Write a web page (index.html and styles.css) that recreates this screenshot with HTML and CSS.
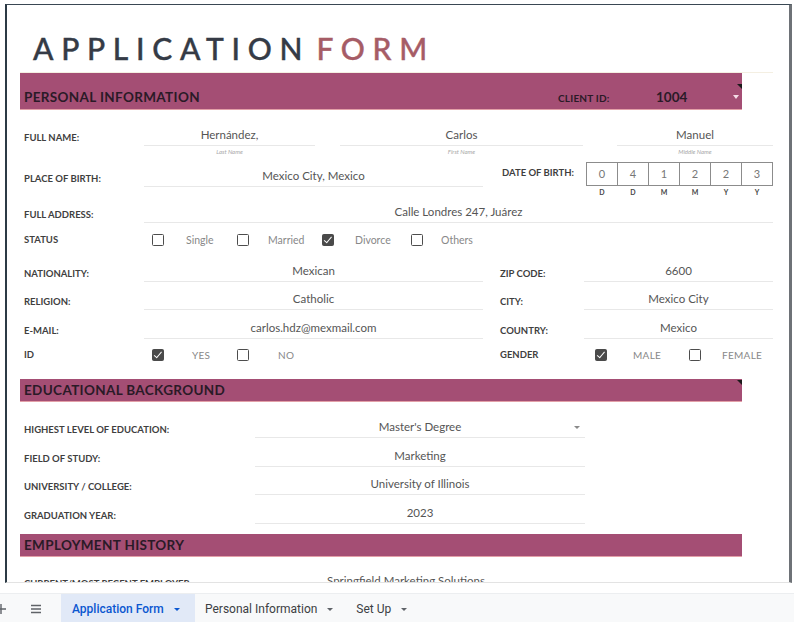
FILE: index.html
```html
<!DOCTYPE html>
<html>
<head>
<meta charset="utf-8">
<title>Application Form</title>
<link rel="stylesheet" href="styles.css">
</head>
<body>
<div class="sheet">
  <div class="title-wrap">
    <h1 class="title">APPLICATION <span class="accent">FORM</span></h1>
  </div>

  <div class="bar bar-personal">
    <span class="bar-title bt-personal">PERSONAL INFORMATION</span>
    <span class="client-lbl">CLIENT ID:</span>
    <span class="client-val">1004</span>
    <span class="dd-white"></span>
    <span class="note note-personal"></span>
  </div>

  <div class="row r-name">
    <div class="lbl lbl-sub">FULL NAME:</div>
    <div class="fcol w-last"><div class="val">Hernández,</div><div class="sub">Last Name</div></div>
    <div class="fcol w-first"><div class="val">Carlos</div><div class="sub">First Name</div></div>
    <div class="fcol w-middle"><div class="val">Manuel</div><div class="sub">Middle Name</div></div>
  </div>

  <div class="row r-place">
    <div class="lbl">PLACE OF BIRTH:</div>
    <div class="val w-half">Mexico City, Mexico</div>
    <div class="dob-wrap">
      <div class="dob-lbl">DATE OF BIRTH:</div>
      <div class="dob-col">
        <div class="dob-boxes">
          <span>0</span><span>4</span><span>1</span><span>2</span><span>2</span><span>3</span>
        </div>
        <div class="dob-keys">
          <span>D</span><span>D</span><span>M</span><span>M</span><span>Y</span><span>Y</span>
        </div>
      </div>
    </div>
  </div>

  <div class="row r-addr">
    <div class="lbl">FULL ADDRESS:</div>
    <div class="val w-full">Calle Londres 247, Juárez</div>
  </div>

  <div class="row r-check r-status">
    <div class="lbl lbl-check">STATUS</div>
    <div class="opt o-single"><span class="cb"></span><span class="opt-txt">Single</span></div>
    <div class="opt o-married"><span class="cb"></span><span class="opt-txt">Married</span></div>
    <div class="opt o-divorce"><span class="cb checked"></span><span class="opt-txt">Divorce</span></div>
    <div class="opt o-others"><span class="cb"></span><span class="opt-txt">Others</span></div>
  </div>

  <div class="row r-nat">
    <div class="lbl">NATIONALITY:</div>
    <div class="val w-half">Mexican</div>
    <div class="lbl lbl-right">ZIP CODE:</div>
    <div class="val w-right">6600</div>
  </div>

  <div class="row r-rel">
    <div class="lbl">RELIGION:</div>
    <div class="val w-half">Catholic</div>
    <div class="lbl lbl-right">CITY:</div>
    <div class="val w-right">Mexico City</div>
  </div>

  <div class="row r-mail">
    <div class="lbl">E-MAIL:</div>
    <div class="val w-half">carlos.hdz@mexmail.com</div>
    <div class="lbl lbl-right">COUNTRY:</div>
    <div class="val w-right">Mexico</div>
  </div>

  <div class="row r-check r-id">
    <div class="lbl lbl-check">ID</div>
    <div class="opt o-yes"><span class="cb checked"></span><span class="opt-txt up">YES</span></div>
    <div class="opt o-no"><span class="cb"></span><span class="opt-txt up">NO</span></div>
    <div class="lbl lbl-gender">GENDER</div>
    <div class="opt o-male"><span class="cb checked"></span><span class="opt-txt up">MALE</span></div>
    <div class="opt o-female"><span class="cb"></span><span class="opt-txt up">FEMALE</span></div>
  </div>

  <div class="bar bar-small bar-edu">
    <span class="bar-title">EDUCATIONAL BACKGROUND</span>
    <span class="note note-edu"></span>
  </div>

  <div class="row r-edu1">
    <div class="lbl lbl-wide">HIGHEST LEVEL OF EDUCATION:</div>
    <div class="val w-edu has-dd">Master's Degree<span class="dd-gray"></span></div>
  </div>
  <div class="row r-edu2">
    <div class="lbl lbl-wide">FIELD OF STUDY:</div>
    <div class="val w-edu">Marketing</div>
  </div>
  <div class="row r-edu3">
    <div class="lbl lbl-wide">UNIVERSITY / COLLEGE:</div>
    <div class="val w-edu">University of Illinois</div>
  </div>
  <div class="row r-edu4">
    <div class="lbl lbl-wide">GRADUATION YEAR:</div>
    <div class="val w-edu">2023</div>
  </div>

  <div class="bar bar-small bar-emp">
    <span class="bar-title">EMPLOYMENT HISTORY</span>
  </div>

  <div class="row r-emp1">
    <div class="lbl lbl-wide">CURRENT/MOST RECENT EMPLOYER:</div>
    <div class="val w-edu val-emp">Springfield Marketing Solutions</div>
  </div>
</div>

<div class="tabbar">
  <span class="tb-plus">
    <svg width="12" height="12" viewBox="0 0 12 12"><path d="M6 1v10M1 6h10" stroke="#5f6368" stroke-width="1.4" fill="none"/></svg>
  </span>
  <span class="tb-menu">
    <svg width="12" height="10" viewBox="0 0 12 10"><path d="M1 1.5h10M1 5h10M1 8.5h10" stroke="#5f6368" stroke-width="1.3" fill="none"/></svg>
  </span>
  <div class="tab tab-active">Application Form<span class="caret"></span></div>
  <div class="tab">Personal Information<span class="caret"></span></div>
  <div class="tab">Set Up<span class="caret"></span></div>
</div>
</body>
</html>
```

FILE: styles.css
```css
* { box-sizing: border-box; }

html, body {
  margin: 0;
  padding: 0;
  background: #ffffff;
  width: 794px;
  height: 622px;
  overflow: hidden;
  font-family: "Lato", "Open Sans", sans-serif;
}

.sheet {
  margin: 4px 0 0 5px;
  width: 787px;
  height: 579px;
  border-top: 1px solid #3a4853;
  border-left: 2px solid #2c3a45;
  border-right: 3px solid #6e7277;
  border-bottom: 1px solid #e3e3e3;
  overflow: hidden;
  padding-left: 13px;
}

/* title */
.title-wrap {
  height: 68px;
  padding-top: 25px;
  border-bottom: 1px solid #f4efe2;
  width: 753px;
}
.title {
  margin: 0 0 0 13px;
  font-family: "Lato", sans-serif;
  font-weight: 500;
  font-size: 30px;
  line-height: 36px;
  letter-spacing: 7.7px;
  word-spacing: -9px;
  color: #353b46;
  white-space: nowrap;
  -webkit-text-stroke: 0.4px #353b46;
}
.accent { color: #a65c66; -webkit-text-stroke: 0.4px #a65c66; }

/* section bars */
.bar {
  position: relative;
  width: 722px;
  background: #a44e74;
  border-bottom: 1px solid #e3a0a8;
  display: flex;
  align-items: flex-end;
  padding-left: 4px;
  color: #2a1a27;
  font-weight: 700;
}
.bar-personal {
  height: 37px;
  padding-bottom: 4px;
}
.bar-small {
  height: 23px;
  align-items: center;
}
.bar-edu { margin-top: 18px; }
.bar-emp { margin-top: 10px; }
.bar-title {
  font-size: 13.5px;
  line-height: 16px;
  letter-spacing: 0.35px;
  white-space: nowrap;
}
.bt-personal { width: 534px; flex: none; }
.client-lbl {
  width: 98px;
  flex: none;
  font-size: 10px;
  line-height: 14px;
  letter-spacing: 0.2px;
}
.client-val {
  width: 77px;
  flex: none;
  font-size: 13.5px;
  line-height: 16px;
}
.dd-white {
  margin-bottom: 6px;
  width: 0;
  height: 0;
  border-left: 3.5px solid transparent;
  border-right: 3.5px solid transparent;
  border-top: 4px solid #f4dbe6;
}
.note {
  position: absolute;
  right: 0;
  width: 0;
  height: 0;
  border-left: 5px solid transparent;
  border-top: 5px solid #1a1a1a;
}
.note-personal { top: 11px; }
.note-edu { top: 1px; }

/* rows */
.row {
  display: flex;
  align-items: flex-end;
  padding-left: 4px;
}
.lbl {
  flex: none;
  width: 120px;
  font-size: 9.5px;
  font-weight: 700;
  line-height: 12px;
  padding-bottom: 2px;
  color: #3f3f3f;
  white-space: nowrap;
}
.lbl-sub { padding-bottom: 14px; }
.lbl-wide { width: 231px; }
.lbl-right { width: 84px; margin-left: 17px; }
.lbl-check { width: 128px; padding-bottom: 0; line-height: 12px; }
.lbl-gender { width: 95px; padding-bottom: 0; line-height: 12px; }

.val {
  flex: none;
  border-bottom: 1px solid #e8e8e8;
  line-height: 16px;
  padding-bottom: 2px;
  text-align: center;
  font-size: 11.5px;
  color: #555555;
  white-space: nowrap;
  position: relative;
}
.val-emp { padding-right: 28px; }
.fcol { flex: none; display: flex; flex-direction: column; }
.sub {
  text-align: center;
  font-size: 6px;
  line-height: 12px;
  font-style: italic;
  color: #a8a8a8;
}
.w-last { width: 171px; }
.w-first { width: 243px; margin-left: 25px; }
.w-middle { width: 156px; margin-left: 34px; }
.w-half { width: 339px; }
.w-full { width: 629px; }
.w-right { width: 189px; }
.w-edu { width: 330px; }

.r-name { height: 48px; }
.r-place { height: 29px; }
.r-addr { height: 36px; }
.r-nat { height: 36px; }
.r-rel { height: 28px; }
.r-mail { height: 29px; }
.r-edu1 { height: 36px; }
.r-edu2 { height: 29px; }
.r-edu3 { height: 28px; }
.r-edu4 { height: 29px; }
.r-emp1 { height: 35px; }

/* date of birth */
.dob-wrap {
  display: flex;
  align-items: flex-start;
  margin-left: 19px;
  margin-bottom: -11px;
}
.dob-lbl {
  width: 84px;
  font-size: 9.5px;
  font-weight: 700;
  line-height: 21px;
  color: #3f3f3f;
  white-space: nowrap;
}
.dob-boxes, .dob-keys {
  display: grid;
  grid-template-columns: repeat(6, 31px);
}
.dob-boxes {
  border-left: 1px solid #8c8c8c;
  border-top: 1px solid #8c8c8c;
  border-bottom: 1px solid #8c8c8c;
  height: 24px;
}
.dob-boxes span {
  border-right: 1px solid #8c8c8c;
  text-align: center;
  font-size: 11px;
  line-height: 21px;
  color: #777777;
}
.dob-keys span {
  text-align: center;
  font-size: 7px;
  font-weight: 700;
  line-height: 11px;
  padding-top: 1px;
  color: #474747;
  padding-left: 1px;
}

/* checkbox rows */
.r-check {
  align-items: center;
  height: 12px;
}
.r-status { margin-top: 11px; }
.r-id { margin-top: 10px; }
.opt {
  flex: none;
  display: flex;
  align-items: center;
}
.cb {
  flex: none;
  width: 12px;
  height: 12px;
  border: 1.5px solid #4d4d4d;
  border-radius: 1.5px;
  position: relative;
}
.cb.checked {
  background: #4a4a4a;
  border-color: #4a4a4a;
}
.cb.checked::after {
  content: "";
  position: absolute;
  left: 3px;
  top: 0px;
  width: 3px;
  height: 6.5px;
  border-right: 1.6px solid #ffffff;
  border-bottom: 1.6px solid #ffffff;
  transform: rotate(40deg);
}
.opt-txt {
  font-size: 10.5px;
  color: #888888;
  line-height: 12px;
  white-space: nowrap;
}
.opt-txt.up { font-size: 10px; letter-spacing: 0.3px; }

.o-single, .o-married { width: 85px; }
.o-divorce { width: 89px; }
.o-single .opt-txt { margin-left: 22px; }
.o-married .opt-txt { margin-left: 19px; }
.o-divorce .opt-txt { margin-left: 21px; }
.o-others .opt-txt { margin-left: 18px; }
.o-yes { width: 85px; }
.o-yes .opt-txt { margin-left: 28px; }
.o-no { width: 263px; }
.o-no .opt-txt { margin-left: 29px; }
.o-male { width: 94px; }
.o-male .opt-txt { margin-left: 26px; }
.o-female .opt-txt { margin-left: 21px; }

.dd-gray {
  position: absolute;
  right: 5px;
  top: 7px;
  width: 0;
  height: 0;
  border-left: 3px solid transparent;
  border-right: 3px solid transparent;
  border-top: 3.5px solid #8a8a8a;
}

/* bottom tab bar */
.tabbar {
  margin-top: 10px;
  height: 29px;
  background: #f8f9fa;
  border-top: 1px solid #eceef0;
  display: flex;
  align-items: stretch;
  font-family: "Roboto", "Liberation Sans", sans-serif;
  font-size: 12px;
  color: #3c4043;
}
.tb-plus {
  display: flex;
  align-items: center;
  margin-left: -5px;
  width: 35px;
  padding-top: 2px;
}
.tb-menu {
  display: flex;
  align-items: center;
  width: 31px;
  padding-top: 2px;
}
.tab {
  display: flex;
  align-items: center;
  padding: 2px 13px 0 10px;
  white-space: nowrap;
}
.tab-active {
  background: #e1e9f7;
  color: #0b57d0;
  font-weight: 500;
  padding: 2px 11px 0 11px;
  width: 134px;
}
.caret {
  margin-left: 10px;
  width: 0;
  height: 0;
  border-left: 3px solid transparent;
  border-right: 3px solid transparent;
  border-top: 3.5px solid #5f6368;
}
.tab-active .caret { border-top-color: #0b57d0; }
```
